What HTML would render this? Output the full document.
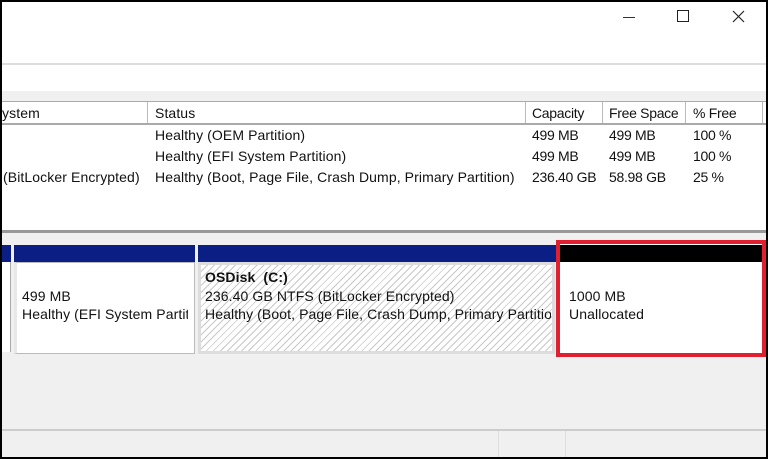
<!DOCTYPE html>
<html><head><style>
*{margin:0;padding:0;box-sizing:border-box}
body{width:768px;height:459px;overflow:hidden;background:#000;font-family:"Liberation Sans",sans-serif;font-size:14px;color:#111;position:relative}
.a{position:absolute}
.t{position:absolute;white-space:nowrap;font-size:14px;letter-spacing:0.1px}
</style></head><body>
<div class="a" style="left:2px;top:2px;width:764px;height:455px;background:#fff"></div>
<div class="a" style="left:623px;top:17px;width:12px;height:1px;background:#333"></div>
<div class="a" style="left:677px;top:10px;width:12px;height:12px;border:1px solid #222"></div>
<svg class="a" style="left:732px;top:10px" width="13" height="13"><path d="M1 1L12 12M12 1L1 12" stroke="#222" stroke-width="1.2"/></svg>
<div class="a" style="left:2px;top:63px;width:764px;height:2px;background:#ddd"></div>
<div class="a" style="left:2px;top:91px;width:764px;height:10px;background:#f0f0f0"></div>
<div class="a" style="left:2px;top:101px;width:764px;height:1px;background:#aaa"></div>
<div class="a" style="left:2px;top:123px;width:764px;height:2px;background:#aaa"></div>
<div class="a" style="left:147px;top:102px;width:1px;height:21px;background:#bbb"></div>
<div class="a" style="left:525px;top:102px;width:1px;height:21px;background:#bbb"></div>
<div class="a" style="left:602px;top:102px;width:1px;height:21px;background:#bbb"></div>
<div class="a" style="left:685px;top:102px;width:1px;height:21px;background:#bbb"></div>
<div class="a" style="left:762px;top:102px;width:1px;height:21px;background:#bbb"></div>
<div class="t" style="left:2px;top:105px">ystem</div>
<div class="t" style="left:155px;top:105px">Status</div>
<div class="t" style="left:532px;top:105px;letter-spacing:-0.3px">Capacity</div>
<div class="t" style="left:609px;top:105px;letter-spacing:-0.3px">Free Space</div>
<div class="t" style="left:693px;top:105px;letter-spacing:-0.3px">% Free</div>
<div class="t" style="left:155px;top:127px">Healthy (OEM Partition)</div>
<div class="t" style="left:532px;top:127px;letter-spacing:-0.3px">499 MB</div><div class="t" style="left:609px;top:127px;letter-spacing:-0.3px">499 MB</div><div class="t" style="left:693px;top:127px;letter-spacing:-0.3px">100 %</div>
<div class="t" style="left:155px;top:148px">Healthy (EFI System Partition)</div>
<div class="t" style="left:532px;top:148px;letter-spacing:-0.3px">499 MB</div><div class="t" style="left:609px;top:148px;letter-spacing:-0.3px">499 MB</div><div class="t" style="left:693px;top:148px;letter-spacing:-0.3px">100 %</div>
<div class="t" style="left:3px;top:169px">(BitLocker Encrypted)</div>
<div class="t" style="left:155px;top:169px">Healthy (Boot, Page File, Crash Dump, Primary Partition)</div>
<div class="t" style="left:532px;top:169px;letter-spacing:-0.3px">236.40 GB</div><div class="t" style="left:609px;top:169px;letter-spacing:-0.3px">58.98 GB</div><div class="t" style="left:693px;top:169px;letter-spacing:-0.3px">25 %</div>
<div class="a" style="left:2px;top:230px;width:764px;height:3px;background:#999"></div>
<div class="a" style="left:2px;top:233px;width:764px;height:224px;background:#f0f0f0"></div>
<div class="a" style="left:2px;top:245px;width:554px;height:17px;background:#0a1e84"></div>
<div class="a" style="left:11px;top:245px;width:3px;height:110px;background:#f0f0f0"></div>
<div class="a" style="left:195px;top:245px;width:3px;height:110px;background:#f0f0f0"></div>
<div class="a" style="left:2px;top:262px;width:9px;height:90px;background:#fff;border-right:1px solid #aaa"></div>
<div class="a" style="left:14px;top:262px;width:181px;height:92px;background:#fff;border:1px solid #bbb;border-left:3px solid #e8e8e8"></div>
<div class="a" style="left:198px;top:262px;width:357px;height:92px;background:repeating-linear-gradient(135deg,#fff 0 4px,#c8c8c8 4px 5px);border:3px solid #ddd"></div>
<div class="t" style="left:22px;top:288px;width:170px;overflow:hidden">499 MB</div>
<div class="t" style="left:22px;top:306px;width:166px;overflow:hidden">Healthy (EFI System Partition)</div>
<div class="t" style="left:205px;top:269px;font-weight:bold">OSDisk&nbsp; (C:)</div>
<div class="t" style="left:205px;top:288px">236.40 GB NTFS (BitLocker Encrypted)</div>
<div class="t" style="left:205px;top:306px;width:346px;overflow:hidden">Healthy (Boot, Page File, Crash Dump, Primary Partition)</div>
<div class="a" style="left:556px;top:240px;width:210px;height:117px;background:#fff;border:4px solid #e02030"></div>
<div class="a" style="left:560px;top:245px;width:202px;height:17px;background:#000"></div>
<div class="t" style="left:569px;top:288px">1000 MB</div>
<div class="t" style="left:569px;top:306px">Unallocated</div>
<div class="a" style="left:2px;top:429px;width:764px;height:2px;background:#ccc"></div>
<div class="a" style="left:498px;top:431px;width:1px;height:26px;background:#ddd"></div>
<div class="a" style="left:565px;top:431px;width:1px;height:26px;background:#ddd"></div>
</body></html>
